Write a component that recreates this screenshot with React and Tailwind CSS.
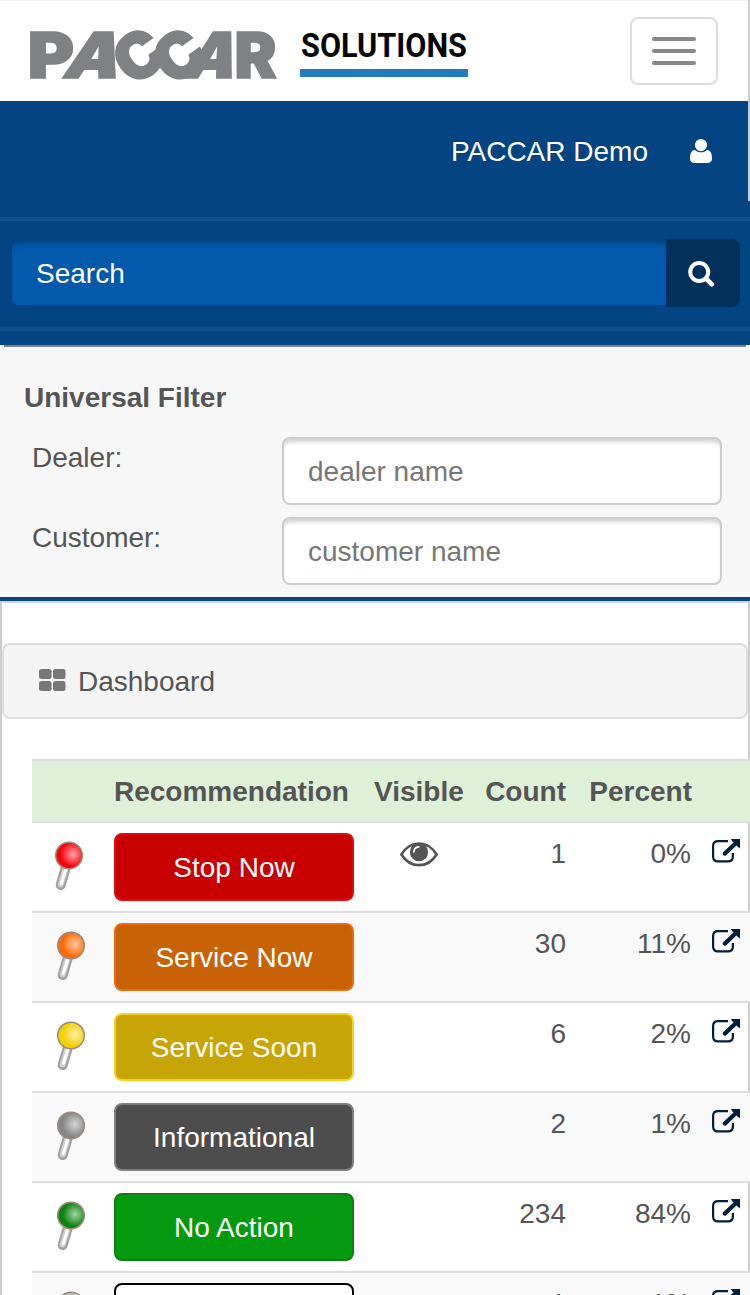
import React from "react";

const rows = [
  { label: "Stop Now", count: "1", percent: "0%", visible: true, pin: "#fb0007", button: "bg-[#c90000] border-[#e30a0f] text-white" },
  { label: "Service Now", count: "30", percent: "11%", pin: "#ff6a00", button: "bg-[#c86305] border-[#ec6a12] text-white" },
  { label: "Service Soon", count: "6", percent: "2%", pin: "#f5d000", button: "bg-[#c7a506] border-[#f2d322] text-white" },
  { label: "Informational", count: "2", percent: "1%", pin: "#868686", button: "bg-[#4d4d4d] border-[#808080] text-white" },
  { label: "No Action", count: "234", percent: "84%", pin: "#07820a", button: "bg-[#05990f] border-[#127d18] text-white" },
  { label: "", count: "1", percent: "1%", pin: "#b4b4b4", button: "bg-white border-black text-black" },
];

function Logo() {
  return (
    <div className="flex h-[57px] w-[250px] whitespace-nowrap font-['Inter',sans-serif] text-[63px] leading-[57px] font-black text-[#808184] [-webkit-text-stroke:1.7px_#808184]">
      <span className="ml-[-2px] w-[32.500px] shrink-0 origin-[2px_50%] scale-x-[1.12]">P</span>
      <span className="w-[54px] shrink-0 origin-[0_52px] [transform:skewX(-18deg)_scaleX(1.1)]">A</span>
      <span className="w-[40px] shrink-0 origin-[24px_28px] -rotate-[36deg]">C</span>
      <span className="w-[27px] shrink-0 origin-[24px_28px] -rotate-[36deg]">C</span>
      <span className="w-[53px] shrink-0 origin-[0_52px] -skew-x-[18deg]">A</span>
      <span className="w-[45px] shrink-0">R</span>
    </div>
  );
}

function UserIcon() {
  return (
    <svg className="h-6 w-[22px]" viewBox="0 0 22 24" fill="white">
      <path d="M5 11C1 11.400 0 15 0 19.500C0 22.400 1.800 24 4.500 24H17.500C20.200 24 22 22.400 22 19.500C22 15 21 11.400 17 11C15.500 12.700 13.500 13.300 11 13.300S6.500 12.700 5 11Z" />
      <circle cx="11" cy="6.100" r="6.100" />
    </svg>
  );
}

function SearchIcon() {
  return (
    <svg className="mt-[2px] h-[26px] w-[27px]" viewBox="0 0 27 26" fill="none" stroke="white" strokeLinecap="round">
      <circle cx="11.200" cy="11" r="9" strokeWidth="4" />
      <path d="M18 17.500L23.800 23.300" strokeWidth="4.600" />
    </svg>
  );
}

function EyeIcon() {
  return (
    <svg className="h-[25px] w-[38px]" viewBox="0 0 38 25" fill="none" stroke="#555">
      <path d="M1.400 12.500C6 5 12 1.500 19 1.500S32 5 36.600 12.500C32 20 26 23.200 19 23.200S6 20 1.400 12.500Z" strokeWidth="2.700" strokeLinejoin="round" />
      <circle cx="19" cy="10" r="9.200" fill="#555" stroke="none" />
      <path d="M13.800 10C14 6.800 16 5 18.800 4.800" stroke="white" strokeWidth="1.700" strokeLinecap="round" />
    </svg>
  );
}

function OpenIcon() {
  return (
    <svg className="h-[26px] w-[29px]" viewBox="0 0 29 26" fill="none" stroke="#021e3d">
      <path d="M16 3.200H6Q1.100 3.200 1.100 8V18.500Q1.100 23.400 6 23.400H16Q20.900 23.400 20.900 18.500V15" strokeWidth="2.200" />
      <path d="M12.800 15.600L23.500 5.500" strokeWidth="4.200" strokeLinecap="round" />
      <path d="M18.800 1H28V10.500L25.500 8.500L20.500 3.500Z" fill="#021e3d" stroke="none" />
    </svg>
  );
}

function Pin({ color, index }) {
  const id = "pin-shine-" + index;
  return (
    <svg className={index === 0 ? "h-[54px] w-[34px] -ml-[2px]" : "h-[54px] w-[34px]"} viewBox="0 0 34 54">
      <defs>
        <radialGradient id={id} cx="0.660" cy="0.450" r="0.500">
          <stop offset="0" stopColor="#fff" stopOpacity="0.650" />
          <stop offset="1" stopColor="#fff" stopOpacity="0" />
        </radialGradient>
      </defs>
      <path d="M14 28L8.700 46" stroke="#a0a0a0" strokeWidth="10" strokeLinecap="round" />
      <path d="M14 28L8.700 45.500" stroke="#d0d0d0" strokeWidth="6" strokeLinecap="round" />
      <path d="M14.500 28L9.300 44.500" stroke="#fff" strokeWidth="3" strokeLinecap="round" />
      <circle cx="17" cy="16.500" r="13.300" fill={color} stroke="#998c7c" strokeWidth="1.500" />
      <circle cx="17" cy="16.500" r="12.500" fill={"url(#" + id + ")"} />
    </svg>
  );
}

function FilterField({ label, placeholder }) {
  return (
    <div className="flex h-[68px] items-start justify-between">
      <label className="pl-2 pt-1 leading-[34px]">{label}</label>
      <div className="flex h-[68px] w-[440px] items-center rounded-lg border-2 border-[#ccc] bg-white px-6 pt-[2px] text-[#777] shadow-[inset_0_5px_4px_-2px_#d0d0d0]">{placeholder}</div>
    </div>
  );
}

export default function App() {
  return (
    <div className="h-[1295px] w-[750px] overflow-hidden bg-white font-['Liberation_Sans',Arial,sans-serif] text-[28px] leading-10 text-[#555]">
      <div className="flex h-[345px] flex-col bg-[#044482]">
        <header className="h-[201px] border-r-2 border-[#ccc]">
          <div className="flex h-[101px] items-start border-t border-[#f3f3f3] bg-white pl-[30px] pr-[30px]">
            <div className="mt-[26px]"><Logo /></div>
            <svg className="ml-5 mt-[30px] h-[47px] w-[168px]" viewBox="0 0 168 47">
              <text x="1" y="26" textLength="166" lengthAdjust="spacingAndGlyphs" fill="#050505" fontFamily="Roboto, sans-serif" fontSize="33" fontWeight="700">SOLUTIONS</text>
              <rect y="38" width="168" height="8" fill="#217bbc" />
            </svg>
            <button className="ml-auto mt-4 flex h-[68px] w-[88px] flex-col items-center justify-center gap-2 rounded-lg border-2 border-[#ddd]">
              <span className="h-1 w-11 rounded-sm bg-[#888]" />
              <span className="h-1 w-11 rounded-sm bg-[#888]" />
              <span className="h-1 w-11 rounded-sm bg-[#888]" />
            </button>
          </div>
          <div className="flex h-[100px] items-center justify-end gap-[42px] pr-9 text-white">
            <span className="pt-[2px]">PACCAR Demo</span>
            <UserIcon />
          </div>
        </header>
        <div className="mt-4 h-[114px] border-b-4 border-t-4 border-[#11508c] pl-3 pr-[10px] pt-[18px]">
          <div className="flex h-[68px] items-center">
            <div className="mt-[1px] flex h-[63px] flex-1 items-center rounded-l-md bg-[#0359ac] pl-6 text-white shadow-[inset_0_5px_4px_-2px_#044b91]">Search</div>
            <button className="flex h-[68px] w-[74px] items-center justify-center rounded-r-lg bg-[#02305c] pr-[3px]"><SearchIcon /></button>
          </div>
        </div>
      </div>

      <section className="flex h-[252px] flex-col bg-[#f7f7f7] px-7">
        <div className="-mx-6 h-[2px] bg-[#7c858e]" />
        <h2 className="-ml-1 mt-[31px] font-bold leading-10">Universal Filter</h2>
        <div className="-ml-1 mt-[19px] flex flex-col gap-3">
          <FilterField label="Dealer:" placeholder="dealer name" />
          <FilterField label="Customer:" placeholder="customer name" />
        </div>
      </section>
      <div className="h-1 bg-[#0c4576]" />

      <main className="h-[694px] border-x-2 border-t-2 border-x-[#ccc] border-t-[#c8d5e7]">
        <div className="mt-10 flex h-[76px] items-center gap-3 rounded-lg border-2 border-[#ddd] bg-[#f4f4f4] pl-[35px] pt-[2px]">
          <svg className="-mt-1 h-[22px] w-[27px]" viewBox="0 0 27 22" fill="#777">
            <rect width="12.500" height="10" rx="2.500" />
            <rect x="14" width="12.500" height="10" rx="2.500" />
            <rect y="12" width="12.500" height="10" rx="2.500" />
            <rect x="14" y="12" width="12.500" height="10" rx="2.500" />
          </svg>
          <span>Dashboard</span>
        </div>

        <div className="-mr-[2px] ml-[30px] mt-10">
          <div className="grid h-16 grid-cols-[82px_240px_122px_90px_126px_58px] items-center border-y-2 border-[#ddd] bg-[#dff0d8] pt-[2px] font-bold">
            <span />
            <span>Recommendation</span>
            <span className="pl-5">Visible</span>
            <span className="text-right">Count</span>
            <span className="text-right">Percent</span>
            <span />
          </div>
          {rows.map((row, i) => (
            <div key={i} className="grid h-[90px] grid-cols-[82px_240px_130px_82px_125px_59px] items-start border-b-2 border-[#ddd] even:bg-transparent odd:bg-[#f9f9f9]">
              <div className="pl-[22px] pt-4"><Pin color={row.pin} index={i} /></div>
              <div className={"mt-[10px] flex h-[68px] items-center justify-center rounded-lg border-2 pt-[2px] " + row.button}>{row.label}</div>
              <div className="flex justify-center pt-[19px]">{row.visible ? <EyeIcon /> : null}</div>
              <div className="pt-[11px] text-right">{row.count}</div>
              <div className="pt-[11px] text-right">{row.percent}</div>
              <div className="pl-[21px] pt-[15px]"><OpenIcon /></div>
            </div>
          ))}
        </div>
      </main>
    </div>
  );
}
